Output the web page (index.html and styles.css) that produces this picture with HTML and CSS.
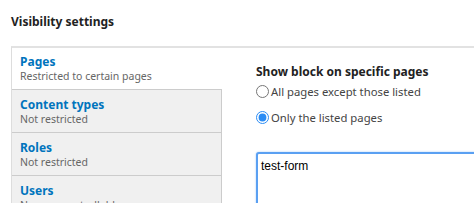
FILE: index.html
```html
<!DOCTYPE html>
<html lang="en">
<head>
  <meta charset="UTF-8" />
  <title>Visibility settings</title>
  <link rel="stylesheet" href="styles.css">
</head>
<body>
  <h2 class="title">Visibility settings</h2>
  <div class="vtabs">
    <ul class="tabs">
      <li class="tab selected"><a href="#">Pages</a><span>Restricted to certain pages</span></li>
      <li class="tab"><a href="#">Content types</a><span>Not restricted</span></li>
      <li class="tab"><a href="#">Roles</a><span>Not restricted</span></li>
      <li class="tab"><a href="#">Users</a><span>No user-controllable</span></li>
    </ul>
    <div class="pane">
      <div class="label">Show block on specific pages</div>
      <label class="opt"><input type="radio" name="vis"> All pages except those listed</label>
      <label class="opt"><input type="radio" name="vis" checked> Only the listed pages</label>
      <textarea class="pages">test-form</textarea>
    </div>
  </div>
</body>
</html>
```

FILE: styles.css
```css
body {
  margin: 0;
  padding: 0 0 0 11px;
  font-family: "Noto Sans", "DejaVu Sans", sans-serif;
  color: #333;
  background: #fff;
  overflow: hidden;
}
.title {
  font-size: 12px;
  font-weight: bold;
  margin: 13px 0 16px;
  color: #222;
}
.vtabs {
  display: flex;
  border-top: 2px solid #e2e2e2;
  border-left: 1px solid #ddd;
  width: 600px;
}
.tabs {
  list-style: none;
  margin: 0;
  padding: 0;
  width: 210px;
  flex: none;
}
.tab {
  background: #f0f0f0;
  border-top: 1px solid #ccc;
  border-right: 1px solid #ccc;
  padding: 7px 8px 5px;
}
.tab.selected {
  background: #fff;
  border-top: none;
  border-right-color: #fff;
  padding-top: 6px;
}
.tab a {
  display: block;
  color: #0074bd;
  font-weight: bold;
  font-size: 12px;
  text-decoration: none;
  line-height: 15px;
}
.tab span {
  display: block;
  color: #666;
  font-size: 10.5px;
  line-height: 15px;
  white-space: nowrap;
}
.pane {
  flex: 1;
  padding: 15px 0 0 34px;
}
.label {
  font-weight: bold;
  font-size: 12px;
  color: #222;
  margin-bottom: 4px;
}
.opt {
  display: flex;
  align-items: center;
  gap: 2px;
  font-size: 11.3px;
  color: #444;
  margin-bottom: 11px;
}
.opt input {
  margin: 0;
  width: 13px;
  height: 13px;
  accent-color: #2b8cf4;
}
.pages {
  display: block;
  margin-top: 27px;
  width: 320px;
  height: 60px;
  border: 2px solid #5aa0f2;
  border-radius: 3px;
  box-shadow: 0 0 2px #9cc6f7;
  font-family: "Liberation Sans", Arial, sans-serif;
  font-size: 12px;
  padding: 5px 3px 2px;
  resize: none;
  outline: none;
}
```
